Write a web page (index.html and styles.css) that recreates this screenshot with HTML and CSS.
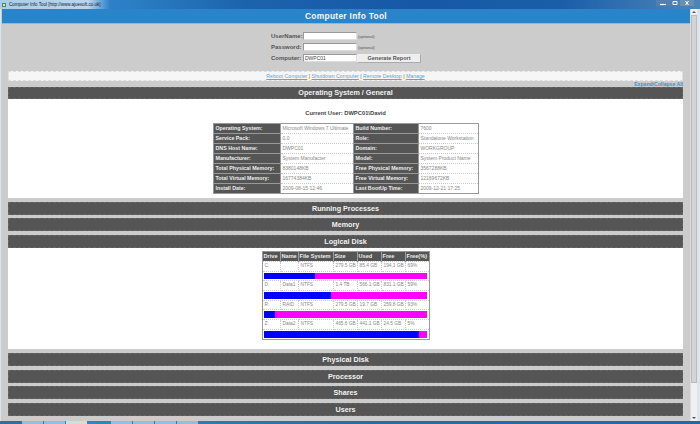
FILE: index.html
```html
<!DOCTYPE html>
<html lang="en">
<head>
<meta charset="utf-8">
<title>Computer Info Tool</title>
<link rel="stylesheet" href="styles.css">
</head>
<body>
<div class="titlebar">
  <div class="title-left"><span class="app-icon"></span><span class="title-text">Computer Info Tool [http://www.ajuesoft.co.uk]</span></div>
  <div class="controls">
    <span class="ctl min"><svg viewBox="0 0 8 6" width="8" height="6"><path d="M1 4.500h6" stroke="#fff" stroke-width="1.200"/></svg></span>
    <span class="ctl max"><svg viewBox="0 0 8 6" width="8" height="6"><path d="M2 1.500h4v3h-4z" fill="none" stroke="#fff"/></svg></span>
    <span class="ctl close"><svg viewBox="0 0 8 6" width="8" height="6"><path d="M2.500 1l3 4M5.500 1l-3 4" stroke="#fff"/></svg></span>
  </div>
</div>
<div class="middle">
  <main class="page">
    <header class="banner">Computer Info Tool</header>
    <form class="login">
      <div class="form-row"><label>UserName:</label><input class="field" type="text"><span class="hint">(optional)</span></div>
      <div class="form-row"><label>Password:</label><input class="field" type="text"><span class="hint">(optional)</span></div>
      <div class="form-row"><label>Computer:</label><input class="field" type="text" value="DWPC01"><button class="go" type="button">Generate Report</button></div>
    </form>
    <div class="content">
      <nav class="links"><a>Reboot Computer</a> | <a>Shutdown Computer</a> | <a>Remote Desktop</a> | <a>Manage</a></nav>
      <div class="expand"><a>Expand/Collapse All</a></div>
      <h2 class="bar first">Operating System / General</h2>
      <section class="panel os">
        <p class="user">Current User: DWPC01\David</p>
        <table class="info">
          <colgroup><col class="c1"><col class="c2"><col class="c3"><col class="c4"></colgroup>
          <tr><th>Operating System:</th><td>Microsoft Windows 7 Ultimate</td><th>Build Number:</th><td>7600</td></tr>
          <tr><th>Service Pack:</th><td>0.0</td><th>Role:</th><td>Standalone Workstation</td></tr>
          <tr><th>DNS Host Name:</th><td>DWPC01</td><th>Domain:</th><td>WORKGROUP</td></tr>
          <tr><th>Manufacturer:</th><td>System Manufacter</td><th>Model:</th><td>System Product Name</td></tr>
          <tr><th>Total Physical Memory:</th><td>8380148KB</td><th>Free Physical Memory:</th><td>3567288KB</td></tr>
          <tr><th>Total Virtual Memory:</th><td>16774384KB</td><th>Free Virtual Memory:</th><td>12169672KB</td></tr>
          <tr><th>Install Date:</th><td>2009-08-15 12:46</td><th>Last BootUp Time:</th><td>2009-12-21 17:25</td></tr>
        </table>
      </section>
      <h2 class="bar">Running Processes</h2>
      <h2 class="bar">Memory</h2>
      <h2 class="bar">Logical Disk</h2>
      <section class="panel disks">
        <table class="disk">
          <colgroup><col class="d1"><col class="d2"><col class="d3"><col class="d4"><col class="d4"><col class="d4"><col class="d4"></colgroup>
          <tr class="head"><th>Drive</th><th>Name</th><th>File System</th><th>Size</th><th>Used</th><th>Free</th><th>Free(%)</th></tr>
          <tr><td>C:</td><td></td><td>NTFS</td><td>279.5 GB</td><td>85.4 GB</td><td>194.1 GB</td><td>69%</td></tr>
          <tr><td class="meter" colspan="7"><div class="track"><div class="used" style="width:31.500%"></div></div></td></tr>
          <tr><td>D:</td><td>Data1</td><td>NTFS</td><td>1.4 TB</td><td>566.1 GB</td><td>831.1 GB</td><td>59%</td></tr>
          <tr><td class="meter" colspan="7"><div class="track"><div class="used" style="width:41.400%"></div></div></td></tr>
          <tr><td>R:</td><td>RAID</td><td>NTFS</td><td>279.5 GB</td><td>19.7 GB</td><td>259.8 GB</td><td>93%</td></tr>
          <tr><td class="meter" colspan="7"><div class="track"><div class="used" style="width:7%"></div></div></td></tr>
          <tr><td>Z:</td><td>Data2</td><td>NTFS</td><td>465.6 GB</td><td>441.1 GB</td><td>24.5 GB</td><td>5%</td></tr>
          <tr><td class="meter" colspan="7"><div class="track"><div class="used" style="width:95.500%"></div></div></td></tr>
        </table>
      </section>
      <h2 class="bar">Physical Disk</h2>
      <h2 class="bar">Processor</h2>
      <h2 class="bar">Shares</h2>
      <h2 class="bar">Users</h2>
    </div>
  </main>
  <div class="scrollbar">
    <span class="arrow up"></span>
    <span class="thumb"></span>
    <span class="arrow down"></span>
  </div>
</div>
<div class="taskbar">
  <span class="task orb"></span>
  <span class="task"></span>
  <span class="task"></span>
  <span class="task warm"></span>
  <span class="gap"></span>
  <span class="task"></span>
  <span class="task"></span>
  <span class="task"></span>
  <span class="task"></span>
</div>
</body>
</html>
```

FILE: styles.css
```css
* { box-sizing: border-box; }
html, body { margin: 0; height: 100%; }
body {
  width: 700px;
  height: 424px;
  overflow: hidden;
  display: flex;
  flex-direction: column;
  font-family: "Liberation Sans", Arial, sans-serif;
  background: #dbe5ee;
}
.titlebar {
  height: 9px;
  display: flex;
  justify-content: space-between;
  background: linear-gradient(90deg, #2f86cc 0, #2c7fc6 18%, #1c63ae 35%, #1658a6 60%, #1a5ea9 80%, #4d85b8 100%);
  color: #1a1a2a;
  font-size: 4.500px;
  line-height: 8px;
  white-space: nowrap;
}
.title-left { display: flex; align-items: center; padding-left: 2px; background: linear-gradient(90deg, #a9cdea, #b9d6ee 80%, transparent); padding-right: 10px; }
.app-icon { width: 4px; height: 4px; background: #cfe8d0; border: 1px solid #4a8a5a; margin-right: 3px; }
.controls { display: flex; padding-right: 6px; height: 6px; }
.ctl { height: 6px; display: flex; justify-content: center; background: #4f80ae; }
.ctl.min { width: 13px; }
.ctl.max { width: 11px; }
.ctl.close { width: 14px; background: #6b8fb2; }
.middle { flex: 1; min-height: 0; display: flex; padding: 0 3px 0 1px; }
.page { width: 689px; background: #ccc; display: flex; flex-direction: column; }
.banner {
  height: 15px;
  margin-left: 1px;
  background: #2a84c9;
  border-bottom: 1px solid #8bb9dc;
  color: #f4f8fb;
  font-size: 8.400px;
  font-weight: bold;
  line-height: 15px;
  text-align: center;
  letter-spacing: 0.3px;
}
.login {
  height: 47px;
  padding: 8px 0 0 0;
  display: flex;
  flex-direction: column;
  gap: 3px;
  font-size: 6px;
  font-weight: bold;
  color: #555;
}
.form-row { height: 8px; display: flex; align-items: center; padding-left: 270px; }
.form-row label { width: 32px; }
.field {
  width: 54px;
  height: 8px;
  padding: 0 1px;
  margin: 0;
  background: #fff;
  border: 1px solid #999;
  border-right-color: #ddd;
  border-bottom-color: #ddd;
  font: 5px "Liberation Sans", Arial, sans-serif;
  color: #444;
}
.hint { font-size: 4px; font-weight: normal; color: #555; margin-left: 1px; }
.go {
  width: 64px;
  height: 9px;
  padding: 0;
  margin: 0;
  background: #eee;
  border: 1px solid #aaa;
  border-top-color: #eee;
  border-left-color: #eee;
  font: bold 5.500px "Liberation Sans", Arial, sans-serif;
  color: #555;
}
.content { flex: 1; padding: 0 7px 0 7px; }
.links {
  height: 10px;
  background: #f6f6f6;
  border: 1px dashed #ddd;
  font-size: 5.200px;
  line-height: 8px;
  text-align: center;
  color: #666;
}
a { color: #5aa6dc; text-decoration: underline; }
.expand { height: 6px; font-size: 5.100px; font-weight: bold; line-height: 6px; text-align: right; }
.expand a { text-decoration: none; color: #3b8fcc; }
.bar {
  height: 13px;
  margin: 3.670px 0 0;
  background: #555;
  border: 1px dashed #666;
  color: #f2f2f2;
  font-size: 7.200px;
  font-weight: bold;
  line-height: 11px;
  text-align: center;
}
.bar.first { margin-top: 0; height: 12px; line-height: 10px; }
.panel { background: #fff; }
.os { height: 99px; display: flex; flex-direction: column; align-items: center; }
.user { margin: 11px 0 5.500px; height: 7px; font-size: 5.800px; line-height: 7px; font-weight: bold; color: #444; }
.info, .disk { border-collapse: collapse; table-layout: fixed; border: 1px solid #999; color: #888; }
.info { width: 265px; font-size: 5px; }
.c1 { width: 67px; }
.c2 { width: 73px; }
.c3 { width: 65px; }
.c4 { width: 60px; }
.info tr { height: 10px; }
.info th {
  background: #555;
  color: #eee;
  font-size: 5.300px;
  text-align: left;
  padding: 0 2px;
  white-space: nowrap;
  overflow: hidden;
  border: 1px solid #999;
}
.info td { padding: 0 2px; white-space: nowrap; overflow: hidden; border: 1px dotted #ccc; }
.disks { height: 101.500px; display: flex; justify-content: center; padding-top: 3px; align-items: flex-start; }
.disk { width: 167px; font-size: 4.800px; }
.d1 { width: 18px; }
.d2 { width: 18px; }
.d3 { width: 35px; }
.d4 { width: 24px; }
.disk .head { height: 10px; }
.disk th {
  background: #555;
  color: #eee;
  font-size: 5.600px;
  line-height: 8px;
  text-align: left;
  padding: 0 1px;
  white-space: nowrap;
  overflow: hidden;
  border-right: 1px solid #999;
}
.disk td { padding: 0 1px 0 2px; line-height: 8.700px; white-space: nowrap; overflow: hidden; border: 1px dotted #ccc; }
.disk td.meter { padding: 1px 2px 1px 1px; line-height: 0; }
.track { height: 6.700px; background: #f0f; }
.used { height: 100%; background: #00f; }
.scrollbar { width: 7px; background: #f0f0f0; display: flex; flex-direction: column; border-left: 1px solid #ddd; }
.arrow { height: 6px; position: relative; }
.arrow::after { content: ""; position: absolute; left: 1px; width: 0; height: 0; border-left: 2px solid transparent; border-right: 2px solid transparent; }
.arrow.up::after { top: 2px; border-bottom: 2px solid #555; }
.arrow.down::after { top: 2px; border-top: 2px solid #555; }
.thumb { height: 368px; margin-bottom: auto; background: #d4d4d4; border: 1px solid #bbb; }
.taskbar { height: 3px; display: flex; gap: 1px; background: linear-gradient(90deg, #1d6fb0, #2b88c8 10%, #1d6fb0 50%, #1a6ab0); }
.task { width: 21px; background: #8fc0de; }
.task.orb { background: #2a6fa8; }
.task.warm { background: #cfe0d8; }
.gap { width: 22px; }
```
